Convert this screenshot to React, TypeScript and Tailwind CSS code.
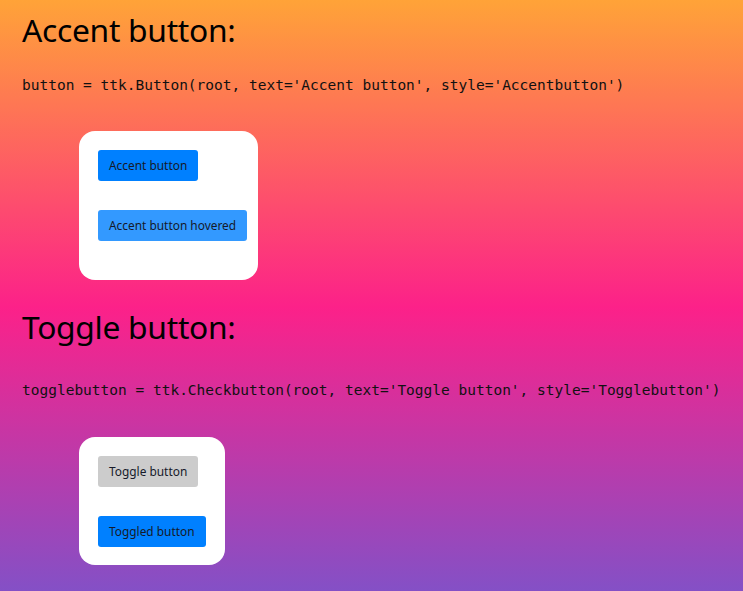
const headingFont = { fontFamily: '"Noto Sans", "Open Sans", sans-serif' }

function Heading({ children }: { children: string }) {
  return (
    <h1 className="text-[31.8px] leading-[38px] font-normal text-black font-['Noto_Sans',sans-serif] tracking-[-0.3px]">
      {children}
    </h1>
  )
}

function Code({ children }: { children: string }) {
  return (
    <p className="font-['DejaVu_Sans_Mono',monospace] text-[14.5px] leading-[20px] text-[#111] whitespace-pre">
      {children}
    </p>
  )
}

function Btn({ label, color }: { label: string; color: string }) {
  return (
    <div
      className={`h-[31px] inline-flex items-center px-[11px] rounded-[3px] text-[11.9px] text-[#161a2a] font-['Noto_Sans',sans-serif] ${color}`}
    >
      {label}
    </div>
  )
}

export default function App() {
  return (
    <div
      className="w-[743px] h-[591px] overflow-hidden bg-[linear-gradient(180deg,#ffa338_0%,#fc2189_52%,#8450c6_100%)] pl-[22px]"
      style={headingFont}
    >
      <div className="pt-[11px]">
        <Heading>Accent button:</Heading>
      </div>
      <div className="mt-[26px]">
        <Code>{"button = ttk.Button(root, text='Accent button', style='Accentbutton')"}</Code>
      </div>
      <div className="mt-[36px] ml-[57px] w-[179px] h-[149px] bg-white rounded-[16px] pt-[19px] pl-[19px] flex flex-col items-start gap-[29px]">
        <Btn label="Accent button" color="bg-[#0080ff]" />
        <Btn label="Accent button hovered" color="bg-[#3399ff]" />
      </div>
      <div className="mt-[28px]">
        <Heading>Toggle button:</Heading>
      </div>
      <div className="mt-[34px]">
        <Code>{"togglebutton = ttk.Checkbutton(root, text='Toggle button', style='Togglebutton')"}</Code>
      </div>
      <div className="mt-[37px] ml-[57px] w-[146px] h-[128px] bg-white rounded-[16px] pt-[19px] pl-[19px] flex flex-col items-start gap-[29px]">
        <Btn label="Toggle button" color="bg-[#cccccc]" />
        <Btn label="Toggled button" color="bg-[#0080ff]" />
      </div>
    </div>
  )
}
